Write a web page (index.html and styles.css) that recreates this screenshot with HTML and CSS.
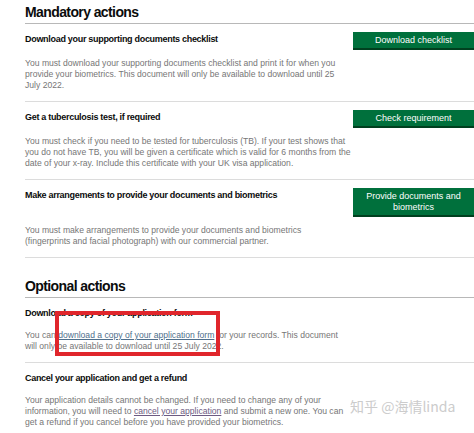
FILE: index.html
```html
<html>

<head>
    <link rel="stylesheet" href="styles.css">
</head>

<body>
    <div class="page">
        <h2 class="section-heading">Mandatory actions</h2>

        <div class="action">
            <h3 class="action-title">Download your supporting documents checklist</h3>
            <a class="button">Download checklist</a>
            <p class="action-text">You must download your supporting documents checklist and print it for when you<br>
                provide your biometrics. This document will only be available to download until 25<br>
                July 2022.</p>
        </div>

        <div class="action">
            <h3 class="action-title">Get a tuberculosis test, if required</h3>
            <a class="button">Check requirement</a>
            <p class="action-text">You must check if you need to be tested for tuberculosis (TB). If your test shows that<br>
                you do not have TB, you will be given a certificate which is valid for 6 months from the<br>
                date of your x-ray. Include this certificate with your UK visa application.</p>
        </div>

        <div class="action">
            <h3 class="action-title">Make arrangements to provide your documents and biometrics</h3>
            <a class="button">Provide documents and biometrics</a>
            <p class="action-text">You must make arrangements to provide your documents and biometrics<br>
                (fingerprints and facial photograph) with our commercial partner.</p>
        </div>

        <h2 class="section-heading optional">Optional actions</h2>

        <div class="action">
            <h3 class="action-title">Download a copy of your application form</h3>
            <p class="action-text">You can <a class="link">download a copy of your application form</a> for your records. This document<br>
                will only be available to download until 25 July 2022.</p>
        </div>

        <div class="action last">
            <h3 class="action-title">Cancel your application and get a refund</h3>
            <p class="action-text">Your application details cannot be changed. If you need to change any of your<br>
                information, you will need to <a class="link visited">cancel your application</a> and submit a new one. You can<br>
                get a refund if you cancel before you have provided your biometrics.</p>
        </div>
    </div>

    <div class="highlight"></div>
    <div class="watermark">知乎 @海情linda</div>
</body>

</html>
```

FILE: styles.css
```css
body {
    margin: 0;
    background-color: #ffffff;
    font-family: 'Liberation Sans', Arial, sans-serif;
    color: #0b0c0c;
    overflow: hidden;
}

.page {
    width: 449px;
    padding-left: 25px;
}

.section-heading {
    margin: 0;
    padding-top: 4px;
    height: 19px;
    font-size: 14px;
    line-height: 16px;
    letter-spacing: -0.6px;
    font-weight: bold;
    border-bottom: solid #b8b8b8 1px;
}

.optional {
    margin-top: 16px;
}

.action {
    display: grid;
    grid-template-columns: 322px 121px;
    column-gap: 6px;
    align-items: start;
    padding-top: 8px;
    padding-bottom: 10px;
    border-bottom: solid #dcdcdc 1px;
}

.action.last {
    border-bottom: none;
}

.action-title {
    margin: 0;
    font-size: 9px;
    line-height: 14px;
    letter-spacing: -0.3px;
    font-weight: bold;
}

.button {
    background-color: #00703c;
    color: #ffffff;
    font-size: 9px;
    line-height: 11px;
    text-align: center;
    padding: 3px 8px 2px;
    box-shadow: 0 2px 0 #00401f;
}

.action-text {
    grid-column: 1 / -1;
    margin: 10px 0 0;
    font-size: 8.6px;
    line-height: 11px;
    color: #767676;
}

.link {
    color: #4f6f8c;
    text-decoration: underline;
}

.link.visited {
    color: #6d5b82;
}

.highlight {
    position: absolute;
    left: 55px;
    top: 311px;
    width: 157px;
    height: 37px;
    border: solid #e0262c 4px;
}

.watermark {
    position: absolute;
    left: 350px;
    top: 396px;
    font-family: 'Noto Sans CJK SC', sans-serif;
    font-size: 14px;
    color: #cccccc;
}
```
